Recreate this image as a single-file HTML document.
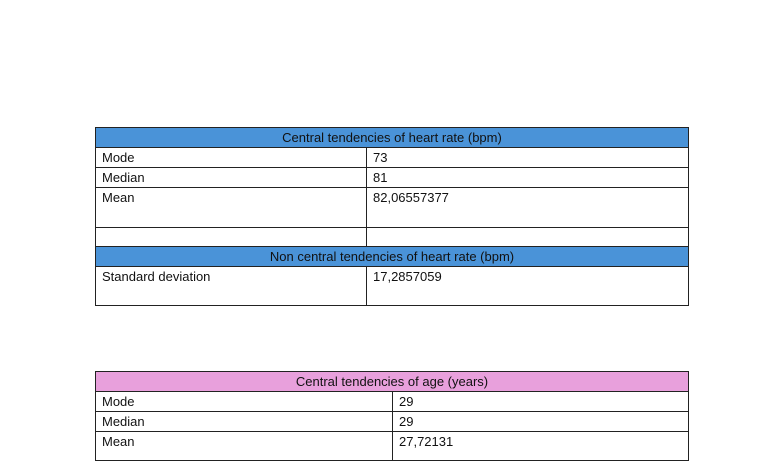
<!DOCTYPE html>
<html><head><style>
body{margin:0;width:784px;height:441px;overflow:hidden;background:#fff;font-family:"Liberation Sans",Arial,sans-serif;font-size:13px;color:#111;position:relative}
.c{position:absolute;box-sizing:border-box;border:1px solid #222;padding:2px 0 0 6px;line-height:15px;background:#fff}
.h{text-align:center;padding-left:0;background:#4a93d8}
.p{background:#e8a0dc}
</style></head><body>
<div class="c h" style="left:95px;top:127px;width:594px;height:21px">Central tendencies of heart rate (bpm)</div>
<div class="c" style="left:95px;top:147px;width:272px;height:21px">Mode</div>
<div class="c" style="left:366px;top:147px;width:323px;height:21px">73</div>
<div class="c" style="left:95px;top:167px;width:272px;height:21px">Median</div>
<div class="c" style="left:366px;top:167px;width:323px;height:21px">81</div>
<div class="c" style="left:95px;top:187px;width:272px;height:41px">Mean</div>
<div class="c" style="left:366px;top:187px;width:323px;height:41px">82,06557377</div>
<div class="c" style="left:95px;top:227px;width:272px;height:20px"></div>
<div class="c" style="left:366px;top:227px;width:323px;height:20px"></div>
<div class="c h" style="left:95px;top:246px;width:594px;height:21px">Non central tendencies of heart rate (bpm)</div>
<div class="c" style="left:95px;top:266px;width:272px;height:40px">Standard deviation</div>
<div class="c" style="left:366px;top:266px;width:323px;height:40px">17,2857059</div>

<div class="c h p" style="left:95px;top:371px;width:594px;height:21px">Central tendencies of age (years)</div>
<div class="c" style="left:95px;top:391px;width:298px;height:21px">Mode</div>
<div class="c" style="left:392px;top:391px;width:297px;height:21px">29</div>
<div class="c" style="left:95px;top:411px;width:298px;height:21px">Median</div>
<div class="c" style="left:392px;top:411px;width:297px;height:21px">29</div>
<div class="c" style="left:95px;top:431px;width:298px;height:30px">Mean</div>
<div class="c" style="left:392px;top:431px;width:297px;height:30px">27,72131</div>
</body></html>
